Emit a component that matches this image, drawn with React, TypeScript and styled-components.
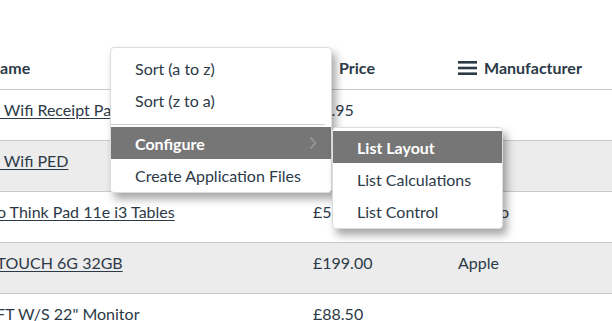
import React from "react";
import styled, { createGlobalStyle } from "styled-components";

const Global = createGlobalStyle`
  html, body { margin: 0; padding: 0; background: #fff; }
  body {
    font-family: Lato, "Open Sans", sans-serif;
    font-size: 16px;
    color: #2c3a47;
    overflow: hidden;
  }
`;

const Page = styled.div`
  position: relative;
  width: 612px;
  height: 321px;
  overflow: hidden;
  padding-top: 47px;
  box-sizing: border-box;
`;

const Table = styled.div`
  margin-left: -51px;
  display: grid;
  grid-template-columns: 351px 145px 1fr;
  width: 714px;
`;

const HeadCell = styled.div`
  display: flex;
  align-items: center;
  gap: 7px;
  padding: 9px 13px;
  height: 24px;
  line-height: 24px;
  font-weight: 700;
  border-bottom: 1px solid #c9c9c9;
  white-space: nowrap;
`;

const Cell = styled.div<{ $alt: boolean }>`
  padding: 8px 13px 18px;
  line-height: 24px;
  height: 24px;
  background: ${(p) => (p.$alt ? "#ececec" : "#fff")};
  border-bottom: 1px solid #c9c9c9;
  white-space: nowrap;
  overflow: hidden;
`;

const Link = styled.a<{ $nudge: number }>`
  display: inline-block;
  margin-left: ${(p) => p.$nudge}px;
  color: #2c3a47;
  text-decoration: underline;
  text-underline-offset: 2px;
`;

const Burger = () => (
  <svg width="19" height="14" viewBox="0 0 19 14" aria-hidden>
    <rect x="0" y="0" width="19" height="2.6" fill="#2c3a47" />
    <rect x="0" y="5.7" width="19" height="2.6" fill="#2c3a47" />
    <rect x="0" y="11.4" width="19" height="2.6" fill="#2c3a47" />
  </svg>
);

const Menu = styled.div<{ $left: number; $top: number; $width: number; $padTop: number }>`
  position: absolute;
  left: ${(p) => p.$left}px;
  top: ${(p) => p.$top}px;
  width: ${(p) => p.$width}px;
  box-sizing: border-box;
  background: #fff;
  border: 1px solid #dcdcdc;
  border-radius: 4px;
  padding: ${(p) => p.$padTop}px 0 1px;
  box-shadow: 4px 6px 9px rgba(0, 0, 0, 0.35);
`;

const Item = styled.div<{ $active?: boolean }>`
  display: flex;
  align-items: center;
  justify-content: space-between;
  height: 32px;
  padding: 0 14px 0 24px;
  background: ${(p) => (p.$active ? "#767676" : "transparent")};
  color: ${(p) => (p.$active ? "#fff" : "#2c3a47")};
  font-weight: ${(p) => (p.$active ? 700 : 400)};
  white-space: nowrap;
`;

const Divider = styled.div`
  height: 1px;
  background: #cfcfcf;
  margin: 8px 6px 2px 0;
`;

const Chevron = () => (
  <svg width="8" height="14" viewBox="0 0 8 14" aria-hidden>
    <polyline points="1.5,1.5 6.5,7 1.5,12.5" fill="none" stroke="#9a9a9a" strokeWidth="1.6" />
  </svg>
);

const rows = [
  { name: "Epson Wifi Receipt Pad", nudge: -5, price: "£7.95", maker: "" },
  { name: "Epson Wifi PED", nudge: -5, price: "£120.00", maker: "" },
  { name: "Lenovo Think Pad 11e i3 Tables", nudge: -7, price: "£529.00", maker: "Lenovo" },
  { name: "iPod TOUCH 6G 32GB", nudge: 0, price: "£199.00", maker: "Apple" },
  { name: "Dell TFT W/S 22\" Monitor", nudge: -7, price: "£88.50", maker: "" },
];

export default function App() {
  return (
    <>
      <Global />
      <Page>
        <Table>
          <HeadCell>
            <Burger />
            Name
          </HeadCell>
          <HeadCell>
            <Burger />
            Price
          </HeadCell>
          <HeadCell>
            <Burger />
            Manufacturer
          </HeadCell>
          {rows.map((r, i) => (
            <React.Fragment key={i}>
              <Cell $alt={i % 2 === 1}>
                <Link $nudge={r.nudge}>{r.name}</Link>
              </Cell>
              <Cell $alt={i % 2 === 1}>{r.price}</Cell>
              <Cell $alt={i % 2 === 1}>{r.maker}</Cell>
            </React.Fragment>
          ))}
        </Table>
        <Menu $left={110} $top={47} $width={222} $padTop={4}>
          <Item>Sort (a to z)</Item>
          <Item>Sort (z to a)</Item>
          <Divider />
          <Item $active>
            Configure
            <Chevron />
          </Item>
          <Item>Create Application Files</Item>
        </Menu>
        <Menu $left={332} $top={127} $width={171} $padTop={3}>
          <Item $active>List Layout</Item>
          <Item>List Calculations</Item>
          <Item>List Control</Item>
        </Menu>
      </Page>
    </>
  );
}
